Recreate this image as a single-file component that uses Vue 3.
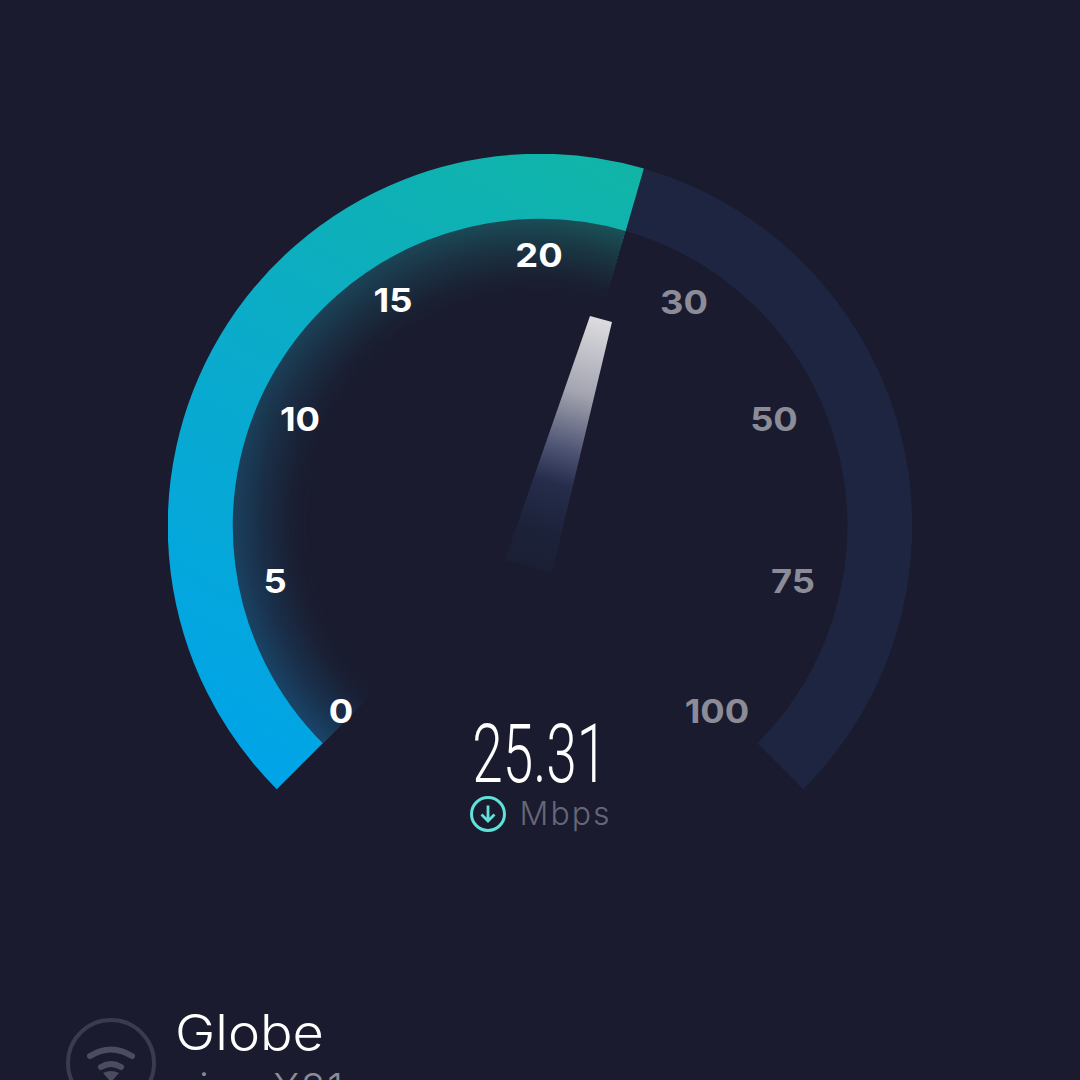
<script setup>
const R = 339.75
const polar = (deg, r = R) => {
  const a = (deg * Math.PI) / 180
  return [372 + r * Math.sin(a), 372 - r * Math.cos(a)].map((n) => n.toFixed(2)).join(' ')
}
const arc = (from, to) => `M${polar(from)} A${R} ${R} 0 ${to - from > 180 ? 1 : 0} 1 ${polar(to)}`
const split = 16.2
const track = arc(split, 135)
const value = arc(-135, split)

const labels = [
  { text: '0', x: 173, y: 557, on: true },
  { text: '5', x: 107, y: 427, on: true },
  { text: '10', x: 132, y: 265, on: true },
  { text: '15', x: 225, y: 146, on: true },
  { text: '20', x: 371, y: 101, on: true },
  { text: '30', x: 516, y: 148, on: false },
  { text: '50', x: 606, y: 265, on: false },
  { text: '75', x: 625, y: 427, on: false },
  { text: '100', x: 549, y: 557, on: false }
]
</script>

<template>
  <main class="screen">
    <section class="gauge">
      <div class="glow"></div>
      <svg class="dial" width="744" height="640" viewBox="0 0 744 640">
        <defs>
          <linearGradient id="valueGrad" gradientUnits="userSpaceOnUse" x1="110" y1="635" x2="475" y2="14">
            <stop offset="0" stop-color="#00a4e8" />
            <stop offset="0.5" stop-color="#0aabcb" />
            <stop offset="1" stop-color="#11b5a6" />
          </linearGradient>
          <linearGradient id="needleGrad" gradientUnits="userSpaceOnUse" x1="433" y1="165" x2="360.5" y2="412.5">
            <stop offset="0" stop-color="#dcdce0" />
            <stop offset="0.3" stop-color="#a3a4b0" />
            <stop offset="0.52" stop-color="#4f5574" />
            <stop offset="0.66" stop-color="#262d4c" />
            <stop offset="0.85" stop-color="#1c2239" />
            <stop offset="1" stop-color="#1b1f34" />
          </linearGradient>
        </defs>
        <path :d="track" class="track" />
        <path :d="value" class="value" />
        <polygon points="422,162 444,168 384,419 337,406" fill="url(#needleGrad)" />
      </svg>
      <span
        v-for="l in labels"
        :key="l.text"
        class="tick"
        :class="{ on: l.on }"
        :style="{ left: l.x + 'px', top: l.y + 'px' }"
      >{{ l.text }}</span>
      <div class="readout">
        <div class="speed">25.31</div>
        <div class="unit">
          <svg width="38" height="38" viewBox="0 0 38 38" fill="none" stroke="#5fe3d9">
            <circle cx="19" cy="19" r="16.5" stroke-width="3" />
            <path d="M19 10.5V26M12.5 19.5 19 26l6.5-6.5" stroke-width="2.8" />
          </svg>
          <span>Mbps</span>
        </div>
      </div>
    </section>

    <footer class="network">
      <svg class="wifi" width="92" height="92" viewBox="0 0 92 92" fill="none" stroke="#3a3b4e">
        <circle cx="46" cy="46" r="43" stroke-width="4" />
        <path d="M25 39Q46 26 67 39" stroke="#4b4c5f" stroke-width="6" stroke-linecap="round" />
        <path d="M36 50Q46 44 56 50" stroke="#4b4c5f" stroke-width="6" stroke-linecap="round" />
        <path d="M38 56Q46 52 54 56L46 65Z" fill="#4b4c5f" stroke="none" />
      </svg>
      <div class="names">
        <div class="carrier">Globe</div>
        <div class="device">vivo X81</div>
      </div>
    </footer>
  </main>
</template>

<style scoped>
.screen {
  width: 1080px;
  height: 1080px;
  overflow: hidden;
  background: #1a1b2e;
  display: flex;
  flex-direction: column;
  align-items: flex-start;
  font-family: Inter, "Liberation Sans", sans-serif;
}
.gauge {
  position: relative;
  width: 744px;
  height: 640px;
  margin: 154px 0 0 168px;
  flex: none;
}
.glow {
  position: absolute;
  left: 0;
  top: 0;
  width: 744px;
  height: 744px;
  background: conic-gradient(
    from 225deg,
    #19466c 0deg,
    #1b3f59 70deg,
    #1c4656 110deg,
    #1a5358 151.2deg,
    transparent 151.2deg
  );
  -webkit-mask-image: radial-gradient(circle closest-side at center, transparent 230px, rgba(0, 0, 0, 0.12) 250px, rgba(0, 0, 0, 0.52) 280px, #000 308px, transparent 308.5px);
  mask-image: radial-gradient(circle closest-side at center, transparent 230px, rgba(0, 0, 0, 0.12) 250px, rgba(0, 0, 0, 0.52) 280px, #000 308px, transparent 308.5px);
}
.dial {
  position: absolute;
  left: 0;
  top: 0;
}
.track,
.value {
  fill: none;
  stroke-width: 65;
}
.track {
  stroke: #1d2540;
}
.value {
  stroke: url(#valueGrad);
}
.tick {
  position: absolute;
  transform: translate(-50%, -50%) scaleX(1.1);
  font-size: 33px;
  font-weight: 700;
  line-height: 1;
  color: #8c8c98;
}
.tick.on {
  color: #ffffff;
}
.readout {
  position: absolute;
  left: 300px;
  top: 567px;
  width: 144px;
  display: flex;
  flex-direction: column;
  align-items: center;
}
.speed {
  font-family: Roboto, sans-serif;
  font-weight: 300;
  font-size: 82px;
  line-height: 66px;
  color: #ffffff;
  transform: scaleX(0.67);
  white-space: nowrap;
}
.unit {
  display: flex;
  align-items: center;
  gap: 13px;
  margin-top: 7px;
  color: #666778;
  font-size: 32px;
  font-weight: 300;
  letter-spacing: 2px;
}
.network {
  display: flex;
  align-items: flex-start;
  gap: 18px;
  margin: 223px 0 0 65px;
  flex: none;
}
.wifi {
  flex: none;
}
.names {
  margin-top: -14px;
}
.carrier {
  font-size: 49px;
  font-weight: 300;
  line-height: 60px;
  color: #ffffff;
  transform: scaleX(1.105);
  transform-origin: left center;
}
.device {
  margin-top: 4px;
  font-size: 40px;
  font-weight: 300;
  line-height: 42px;
  letter-spacing: 2px;
  color: #8c8c98;
}
</style>
